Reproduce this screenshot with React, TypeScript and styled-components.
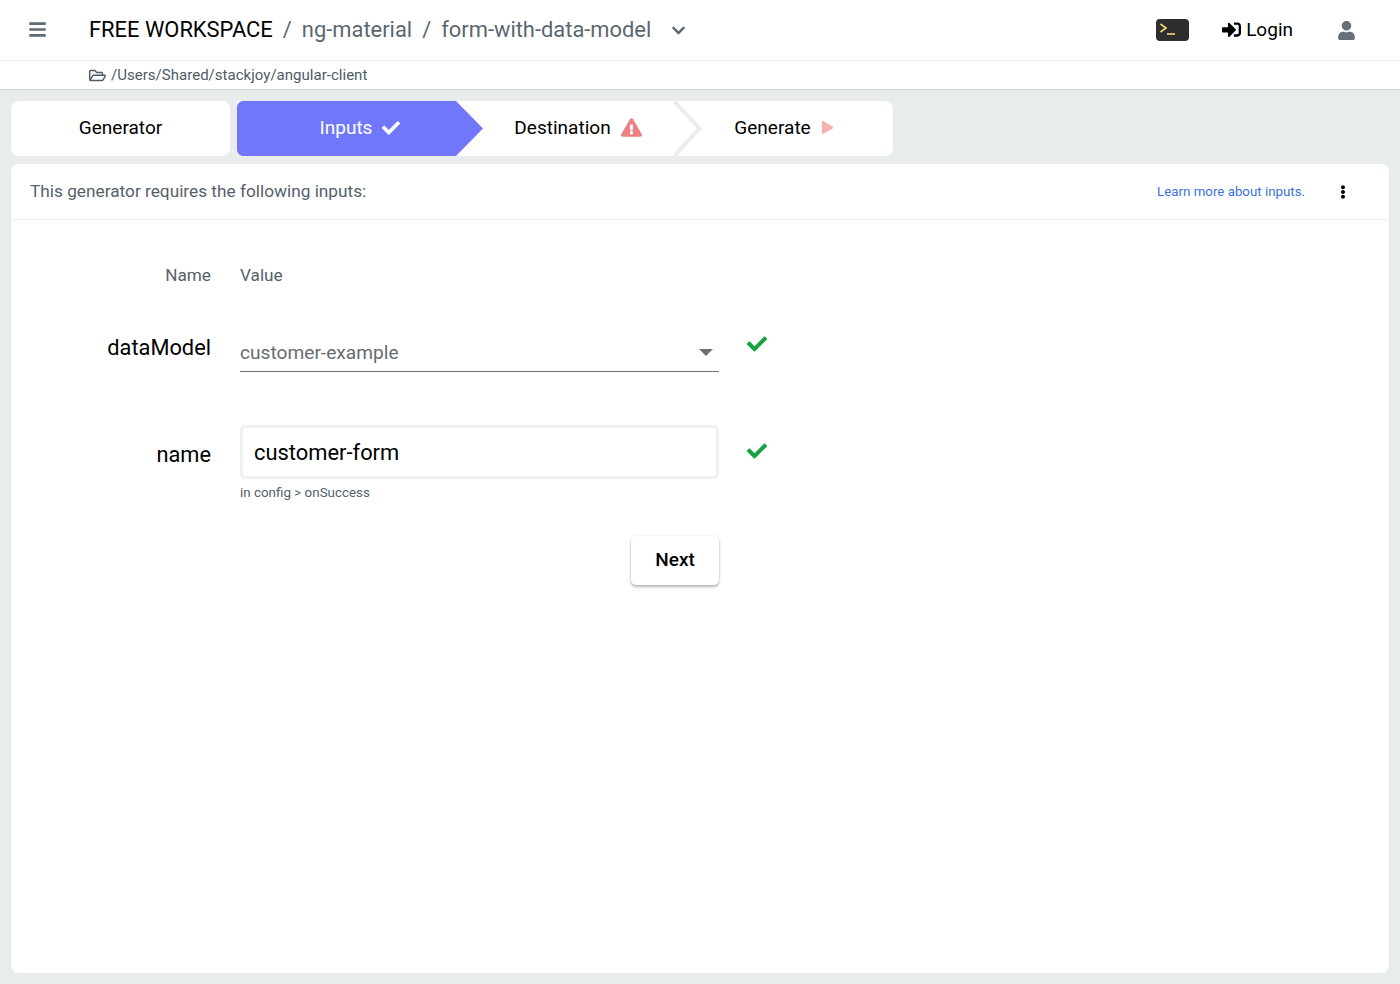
import React from "react";
import styled, { createGlobalStyle } from "styled-components";
import {
  FaBars,
  FaChevronDown,
  FaRegFolderOpen,
  FaCheck,
  FaExclamationTriangle,
  FaPlay,
  FaSignInAlt,
  FaUser,
  FaEllipsisV,
} from "react-icons/fa";

const Global = createGlobalStyle`
  html, body { margin: 0; padding: 0; height: 100%; }
  body { background: #e9eced; font-family: Roboto, "Liberation Sans", sans-serif; color: #000; }
  * { box-sizing: border-box; }
`;

const Page = styled.div`
  width: 1400px;
  height: 984px;
  display: flex;
  flex-direction: column;
  overflow: hidden;
`;

const TopBar = styled.header`
  height: 61px;
  background: #fff;
  border-bottom: 1px solid #eeeeee;
  display: flex;
  align-items: center;
`;

const MenuButton = styled.span`
  width: 89px;
  padding: 0 0 2px 28px;
  display: flex;
  color: #5f6b76;
  font-size: 19px;
`;

const Crumbs = styled.nav`
  display: flex;
  align-items: center;
  padding-bottom: 2px;
  font-size: 21.9px;
  color: #5b6770;
  white-space: nowrap;
`;

const CrumbRoot = styled.span`
  color: #000;
`;

const CrumbSep = styled.span`
  margin: 0 10px;
`;

const CrumbCaret = styled.span`
  display: flex;
  margin: 3px 0 0 20px;
  font-size: 15px;
  color: #5b6770;
`;

const TopActions = styled.div`
  margin-left: auto;
  display: flex;
  align-items: center;
`;

const TerminalBadge = styled.span`
  width: 33px;
  height: 22px;
  margin-right: 33px;
  border-radius: 4px;
  background: #2e2e2e;
  display: flex;
`;

const LoginLink = styled.span`
  display: flex;
  align-items: center;
  gap: 5px;
  padding-bottom: 2px;
  font-size: 19px;
  color: #000;
  margin-right: 44px;
`;

const UserIcon = styled.span`
  display: flex;
  margin-right: 44px;
  font-size: 19px;
  color: #66717c;
`;

const PathBar = styled.div`
  height: 29px;
  background: #fff;
  border-bottom: 1px solid #cfd1d2;
  padding-left: 89px;
  display: flex;
  align-items: center;
  gap: 5px;
  font-size: 15.05px;
  color: #4f5b66;
`;

const FolderIcon = styled.span`
  display: flex;
  font-size: 17px;
`;

const Content = styled.main`
  flex: 1;
  padding: 11px;
  display: flex;
  flex-direction: column;
  gap: 8px;
`;

const Steps = styled.div`
  display: flex;
  gap: 7px;
  height: 55px;
`;

const GeneratorTab = styled.div`
  width: 219px;
  padding-bottom: 2px;
  background: #fff;
  border-radius: 8px;
  display: flex;
  align-items: center;
  justify-content: center;
  font-size: 19.05px;
`;

const Stepper = styled.div`
  width: 656px;
  background: #fff;
  border-radius: 0 8px 8px 0;
  display: flex;
  position: relative;
`;

const Step = styled.div<{ $width: number; $endPad?: number }>`
  width: ${(p) => p.$width}px;
  padding: 0 ${(p) => p.$endPad ?? 0}px 2px 0;
  display: flex;
  align-items: center;
  justify-content: center;
  gap: 10px;
  font-size: 19.05px;
`;

const ActiveStep = styled(Step)`
  background: #7177fb;
  color: #fff;
  border-radius: 6px 0 0 6px;
  clip-path: polygon(0 0, 219px 0, 100% 50%, 219px 100%, 0 100%);
`;

const StepIcon = styled.span<{ $color: string; $size: number }>`
  display: flex;
  color: ${(p) => p.$color};
  font-size: ${(p) => p.$size}px;
`;

const StepDivider = styled.svg`
  position: absolute;
  left: 437px;
  top: 0;
`;

const Panel = styled.section`
  flex: 1;
  background: #fff;
  border-radius: 8px;
  display: flex;
  flex-direction: column;
`;

const PanelHead = styled.div`
  height: 56px;
  border-bottom: 1px solid #eceeef;
  display: flex;
  align-items: center;
  padding: 0 39px 2px 19px;
  font-size: 17.25px;
  color: #56616b;
`;

const LearnLink = styled.a`
  margin: 2px 0 0 auto;
  font-size: 13.3px;
  color: #3a72dc;
  text-decoration: none;
`;

const MoreIcon = styled.span`
  display: flex;
  margin: 2px 0 0 31px;
  font-size: 14px;
  color: #000;
`;

const FormGrid = styled.div`
  display: grid;
  grid-template-columns: 200px 479px 20px;
  column-gap: 29px;
  padding-top: 44px;
  align-content: start;
`;

const HeadName = styled.div`
  text-align: right;
  font-size: 17.2px;
  line-height: 22px;
  color: #56616b;
  margin-bottom: 48px;
`;

const HeadValue = styled.div`
  font-size: 17.2px;
  line-height: 22px;
  color: #56616b;
`;

const HeadSpacer = styled.div``;

const FieldLabel = styled.label<{ $top: number }>`
  text-align: right;
  font-size: 21.8px;
  line-height: 28px;
  padding-top: ${(p) => p.$top}px;
`;

const SelectBox = styled.div`
  height: 38px;
  border-bottom: 1px solid #6f6f6f;
  display: flex;
  align-items: center;
  justify-content: space-between;
  padding-right: 6px;
  margin-bottom: 53px;
  font-size: 19.15px;
  color: #666c72;
`;

const SelectArrow = styled.span`
  width: 0;
  height: 0;
  border-left: 7px solid transparent;
  border-right: 7px solid transparent;
  border-top: 7px solid #6f6f6f;
`;

const OkIcon = styled.span<{ $top: number }>`
  display: flex;
  margin-top: ${(p) => p.$top}px;
  margin-left: -1px;
  font-size: 20px;
  color: #16a340;
`;

const TextField = styled.div`
  height: 54px;
  border: 3px solid #f0f1f1;
  border-radius: 5px;
  display: flex;
  align-items: center;
  padding-left: 11px;
  font-size: 21.9px;
  color: #000;
`;

const Hint = styled.div`
  margin-top: 6px;
  font-size: 13.4px;
  line-height: 16px;
  color: #56616b;
`;

const NextRow = styled.div`
  margin-top: 35px;
  display: flex;
  justify-content: flex-end;
`;

const NextButton = styled.button`
  width: 88px;
  height: 49px;
  padding: 0 0 2px;
  border: 0;
  border-radius: 5px;
  background: #fff;
  font-family: inherit;
  font-size: 19px;
  font-weight: 500;
  color: #000;
  box-shadow: 0 2px 3px 0 rgba(0, 0, 0, 0.28), 0 0 3px rgba(0, 0, 0, 0.08);
`;

const Cell = styled.div``;

export default function App() {
  return (
    <Page>
      <Global />
      <TopBar>
        <MenuButton><FaBars /></MenuButton>
        <Crumbs>
          <CrumbRoot>FREE WORKSPACE</CrumbRoot>
          <CrumbSep>/</CrumbSep>
          <span>ng-material</span>
          <CrumbSep>/</CrumbSep>
          <span>form-with-data-model</span>
          <CrumbCaret><FaChevronDown /></CrumbCaret>
        </Crumbs>
        <TopActions>
          <TerminalBadge>
            <svg width="33" height="22" viewBox="0 0 33 22" fill="none">
              <path d="M4.5 5 L10 9 L4.5 13" stroke="#f5d77e" strokeWidth="1.6" />
              <path d="M11 15 H19" stroke="#f5d77e" strokeWidth="1.6" />
            </svg>
          </TerminalBadge>
          <LoginLink><FaSignInAlt />Login</LoginLink>
          <UserIcon><FaUser /></UserIcon>
        </TopActions>
      </TopBar>
      <PathBar>
        <FolderIcon><FaRegFolderOpen /></FolderIcon>
        /Users/Shared/stackjoy/angular-client
      </PathBar>
      <Content>
        <Steps>
          <GeneratorTab>Generator</GeneratorTab>
          <Stepper>
            <ActiveStep $width={246}>
              Inputs
              <StepIcon $color="#fff" $size={18}><FaCheck /></StepIcon>
            </ActiveStep>
            <Step $width={192} $endPad={2}>
              Destination
              <StepIcon $color="#ef7f82" $size={21}><FaExclamationTriangle /></StepIcon>
            </Step>
            <Step $width={218}>
              Generate
              <StepIcon $color="#f7b0b2" $size={13}><FaPlay /></StepIcon>
            </Step>
            <StepDivider width="28" height="55" viewBox="0 0 28 55" fill="none">
              <path d="M0 0 L25.5 27.5 L0 55" stroke="#ebeded" strokeWidth="4" />
            </StepDivider>
          </Stepper>
        </Steps>
        <Panel>
          <PanelHead>
            This generator requires the following inputs:
            <LearnLink>Learn more about inputs.</LearnLink>
            <MoreIcon><FaEllipsisV /></MoreIcon>
          </PanelHead>
          <FormGrid>
            <HeadName>Name</HeadName>
            <HeadValue>Value</HeadValue>
            <HeadSpacer />
            <FieldLabel $top={0}>dataModel</FieldLabel>
            <SelectBox>
              customer-example
              <SelectArrow />
            </SelectBox>
            <OkIcon $top={0}><FaCheck /></OkIcon>
            <FieldLabel $top={16}>name</FieldLabel>
            <Cell>
              <TextField>customer-form</TextField>
              <Hint>in config &gt; onSuccess</Hint>
              <NextRow><NextButton>Next</NextButton></NextRow>
            </Cell>
            <OkIcon $top={16}><FaCheck /></OkIcon>
          </FormGrid>
        </Panel>
      </Content>
    </Page>
  );
}
